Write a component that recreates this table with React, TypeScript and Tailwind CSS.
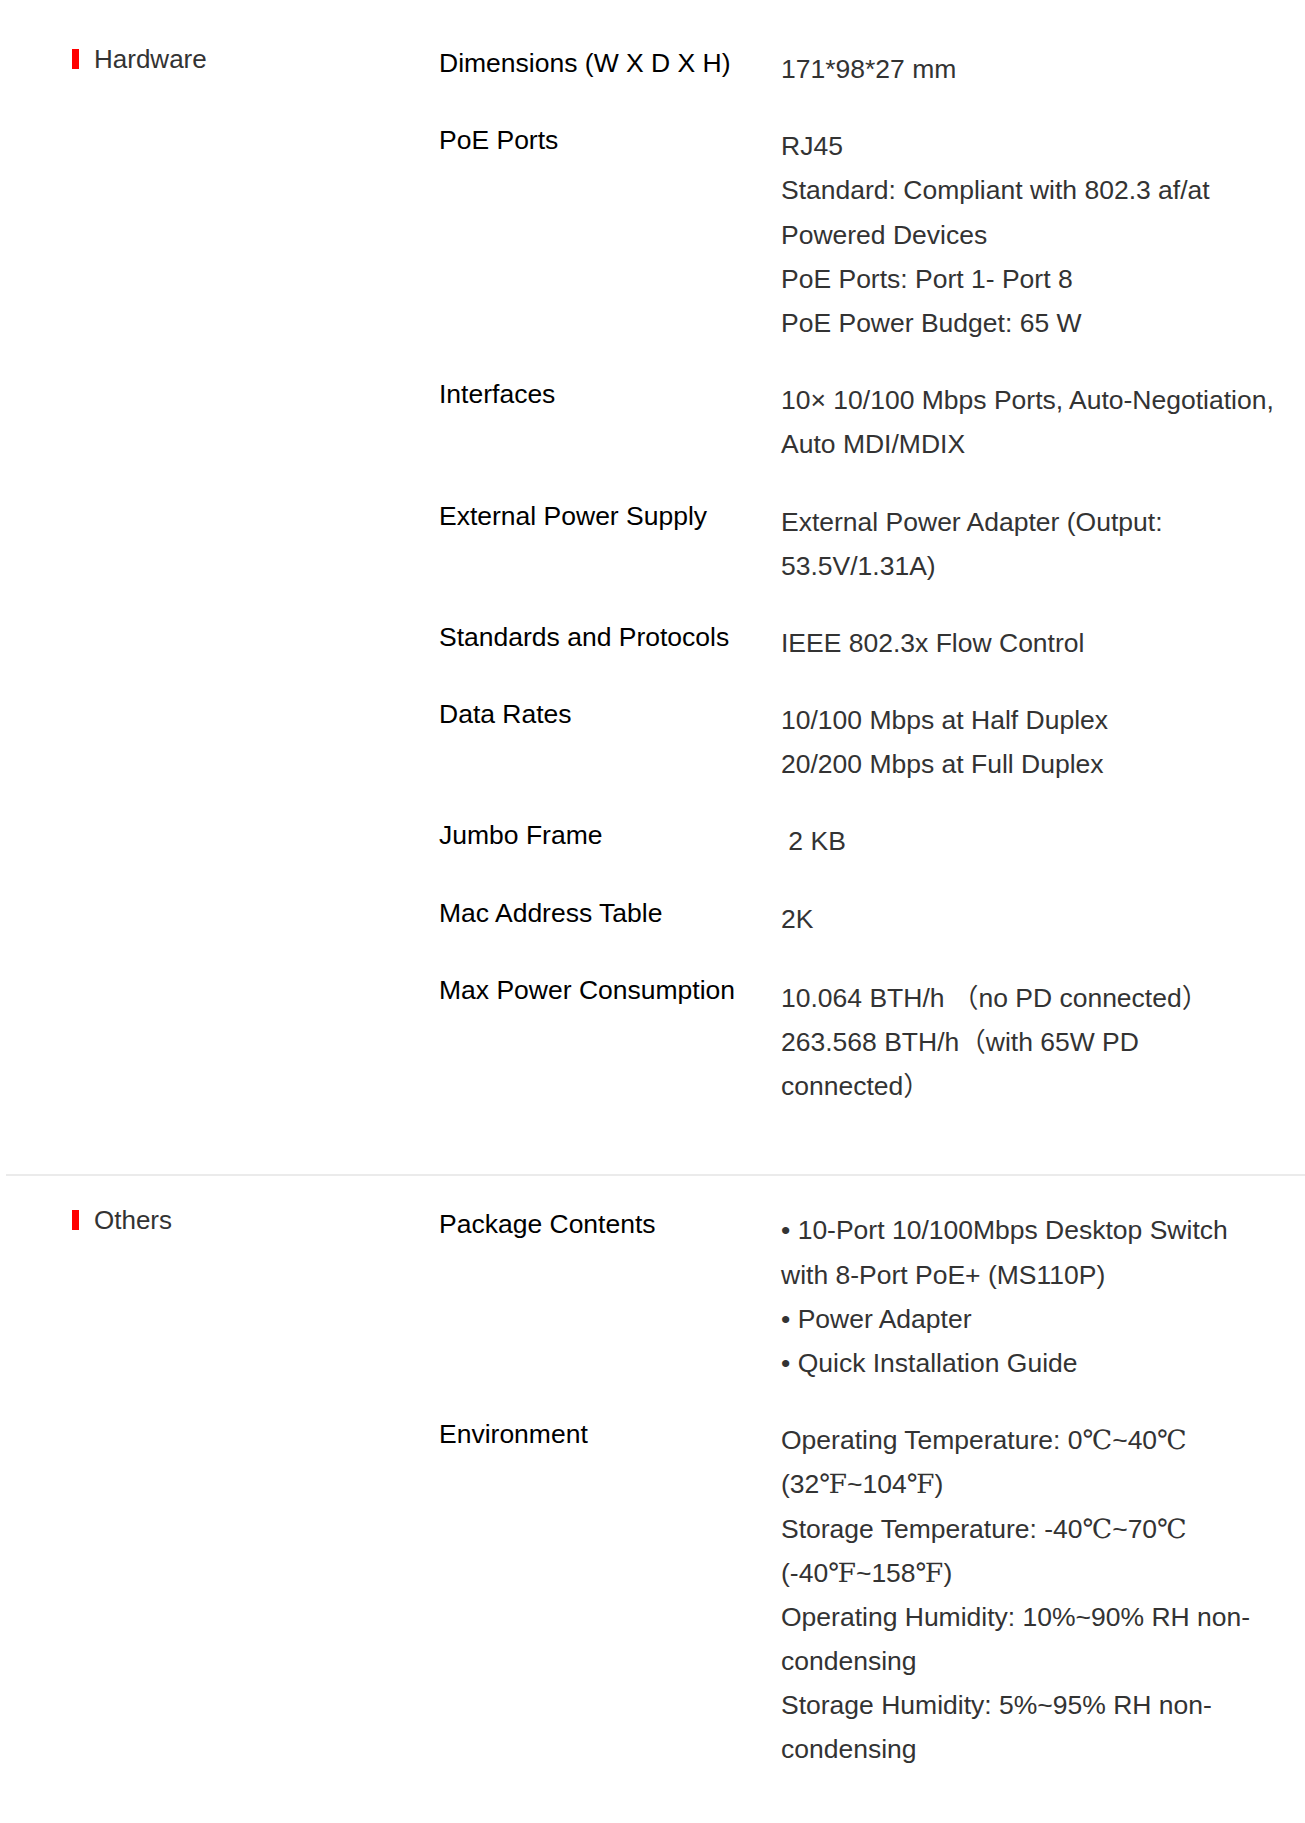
import React from 'react';

type Spec = { label: string; lines: React.ReactNode[] };

// temperature units are drawn from a serif fallback in the original page
const deg = (s: string) => <span className="font-['DejaVu_Serif','Liberation_Serif',serif]">{s}</span>;

// full-width brackets
const fw = (s: string) => <span className="font-['Noto_Sans_CJK_SC',sans-serif]">{s}</span>;

const hardware: Spec[] = [
  { label: 'Dimensions (W X D X H)', lines: ['171*98*27 mm'] },
  {
    label: 'PoE Ports',
    lines: [
      'RJ45',
      'Standard: Compliant with 802.3 af/at',
      'Powered Devices',
      'PoE Ports: Port 1- Port 8',
      'PoE Power Budget: 65 W',
    ],
  },
  { label: 'Interfaces', lines: ['10× 10/100 Mbps Ports, Auto-Negotiation,', 'Auto MDI/MDIX'] },
  { label: 'External Power Supply', lines: ['External Power Adapter (Output:', '53.5V/1.31A)'] },
  { label: 'Standards and Protocols', lines: ['IEEE 802.3x Flow Control'] },
  { label: 'Data Rates', lines: ['10/100 Mbps at Half Duplex', '20/200 Mbps at Full Duplex'] },
  { label: 'Jumbo Frame', lines: ['\u00a02 KB'] },
  { label: 'Mac Address Table', lines: ['2K'] },
  {
    label: 'Max Power Consumption',
    lines: [
      <>10.064 BTH/h {fw('（')}no PD connected{fw('）')}</>,
      <>263.568 BTH/h{fw('（')}with 65W PD</>,
      <>connected{fw('）')}</>,
    ],
  },
];

const others: Spec[] = [
  {
    label: 'Package Contents',
    lines: [
      '• 10-Port 10/100Mbps Desktop Switch',
      'with 8-Port PoE+ (MS110P)',
      '• Power Adapter',
      '• Quick Installation Guide',
    ],
  },
  {
    label: 'Environment',
    lines: [
      <>Operating Temperature: 0{deg('℃')}~40{deg('℃')}</>,
      <>(32{deg('℉')}~104{deg('℉')})</>,
      <>Storage Temperature: -40{deg('℃')}~70{deg('℃')}</>,
      <>(-40{deg('℉')}~158{deg('℉')})</>,
      'Operating Humidity: 10%~90% RH non-',
      'condensing',
      'Storage Humidity: 5%~95% RH non-',
      'condensing',
    ],
  },
];

const Section = ({ title, rows, className }: { title: string; rows: Spec[]; className: string }) => (
  <section className={`ml-[6px] flex ${className}`}>
    {/* category */}
    <div className="w-[433px] shrink-0 pl-[66px]">
      <div className="flex items-center gap-[15px] text-[26px] leading-[24px] text-[#333]">
        <span className="h-[20px] w-[7px] bg-[#f00]" />
        <span>{title}</span>
      </div>
    </div>

    {/* spec rows */}
    <div className="flex flex-col gap-[33px]">
      {rows.map((r) => (
        <div key={r.label} className="flex">
          <div className="w-[342px] shrink-0 text-[26.5px] leading-[33px] text-black">{r.label}</div>
          <div className="w-[520px] text-[26.5px] leading-[44.2px] text-[#333]">
            {r.lines.map((l, i) => (
              <div key={i} className="h-[44.2px] whitespace-pre">
                {l}
              </div>
            ))}
          </div>
        </div>
      ))}
    </div>
  </section>
);

export default function App() {
  return (
    <div className="min-h-screen bg-white font-['Liberation_Sans',Arial,sans-serif]">
      <Section title="Hardware" rows={hardware} className="border-b-2 border-[#ebebeb] pt-[47px] pb-[68px]" />
      <Section title="Others" rows={others} className="pt-[32px] pb-[50px]" />
    </div>
  );
}
